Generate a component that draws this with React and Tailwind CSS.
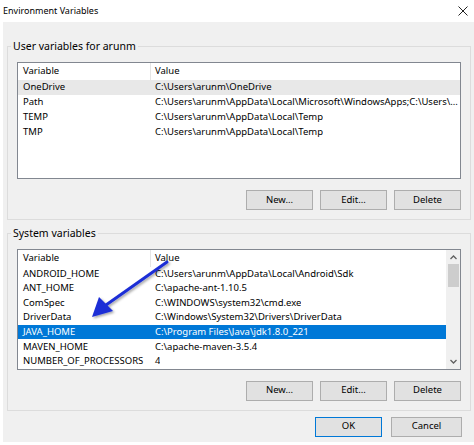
import React from "react";

const userVars = [
  ["OneDrive", "C:\\Users\\arunm\\OneDrive"],
  ["Path", "C:\\Users\\arunm\\AppData\\Local\\Microsoft\\WindowsApps;C:\\Users\\..."],
  ["TEMP", "C:\\Users\\arunm\\AppData\\Local\\Temp"],
  ["TMP", "C:\\Users\\arunm\\AppData\\Local\\Temp"],
];

const systemVars = [
  ["ANDROID_HOME", "C:\\Users\\arunm\\AppData\\Local\\Android\\Sdk"],
  ["ANT_HOME", "C:\\apache-ant-1.10.5"],
  ["ComSpec", "C:\\WINDOWS\\system32\\cmd.exe"],
  ["DriverData", "C:\\Windows\\System32\\Drivers\\DriverData"],
  ["JAVA_HOME", "C:\\Program Files\\Java\\jdk1.8.0_221"],
  ["MAVEN_HOME", "C:\\apache-maven-3.5.4"],
  ["NUMBER_OF_PROCESSORS", "4"],
];

const Button = ({ children, primary, wide }) => (
  <button
    className={`${wide ? "w-[71px]" : "w-[67px]"} h-[20px] bg-[#e1e1e1] text-[9.5px] text-black border ${
      primary ? "border-[#0078d7]" : "border-[#adadad]"
    }`}
  >
    {children}
  </button>
);

const Row = ({ name, value, state }) => {
  // state: "selected" | "inactive" | undefined
  const bg =
    state === "selected"
      ? "bg-[#0078d7] text-white"
      : state === "inactive"
      ? "bg-[#e8e8e8] text-black"
      : "text-black";
  return (
    <div className={`flex h-[15px] items-center whitespace-nowrap overflow-hidden ${bg}`}>
      <div className="w-[133px] pl-[5px] shrink-0 overflow-hidden">{name}</div>
      <div className="pl-[4px] overflow-hidden">{value}</div>
    </div>
  );
};

const ListView = ({ rows, height, selected, inactive, scroll }) => (
  <div className={`flex border border-[#828790] bg-white overflow-hidden ${height}`}>
    <div className="flex-1 flex flex-col min-w-0">
      <div className="flex h-[17px] shrink-0 items-center text-black">
        <div className="w-[133px] pl-[5px] border-r border-[#e5e5e5] h-full flex items-center">
          Variable
        </div>
        <div className="pl-[4px]">Value</div>
      </div>
      {rows.map(([n, v], i) => (
        <Row
          key={n}
          name={n}
          value={v}
          state={i === selected ? "selected" : i === inactive ? "inactive" : undefined}
        />
      ))}
    </div>
    {scroll && (
      <div className="w-[14px] shrink-0 bg-[#f0f0f0] flex flex-col items-center">
        <svg width="9" height="14" viewBox="0 0 9 14" className="shrink-0">
          <path d="M1.5 9 L4.5 6 L7.5 9" fill="none" stroke="#606060" strokeWidth="1.3" />
        </svg>
        <div className="w-[11px] h-[23px] bg-[#cdcdcd] shrink-0" />
        <div className="flex-1" />
        <svg width="9" height="14" viewBox="0 0 9 14" className="shrink-0">
          <path d="M1.5 5 L4.5 8 L7.5 5" fill="none" stroke="#606060" strokeWidth="1.3" />
        </svg>
      </div>
    )}
  </div>
);

const Group = ({ title, children }) => (
  <fieldset className="min-w-0 border border-[#dcdcdc] px-[9px] pb-[9px] pt-[7px]">
    <legend className="-ml-[6px] px-[2px] text-[10.5px] text-black">{title}</legend>
    {children}
  </fieldset>
);

export default function App() {
  return (
    <div
      className="relative w-[474px] h-[445px] bg-white text-[9.5px] overflow-hidden"
      style={{ fontFamily: '"Noto Sans", "Segoe UI", sans-serif' }}
    >
      <div className="h-[22px] flex items-center justify-between pl-[3px] pr-[6px] bg-white">
        <span className="text-[9px] text-black">Environment Variables</span>
        <svg width="10" height="10" viewBox="0 0 10 10">
          <path d="M0.5 0.5 L9.5 9.5 M9.5 0.5 L0.5 9.5" stroke="#222" strokeWidth="1" />
        </svg>
      </div>
      <div className="bg-[#f0f0f0] ml-[3px] h-[420px] pl-[4px] pr-[3px] pt-[17px] flex flex-col">
        <Group title="User variables for arunm">
          <ListView rows={userVars} height="h-[117px]" inactive={0} />
          <div className="flex justify-end gap-[7px] mt-[11px]">
            <Button>New...</Button>
            <Button>Edit...</Button>
            <Button>Delete</Button>
          </div>
        </Group>
        <div className="h-[6px]" />
        <Group title="System variables">
          <ListView rows={systemVars} height="h-[121px]" selected={4} scroll />
          <div className="flex justify-end gap-[7px] mt-[11px]">
            <Button>New...</Button>
            <Button>Edit...</Button>
            <Button>Delete</Button>
          </div>
        </Group>
        <div className="flex justify-end gap-[9px] mt-[6px] pr-[9px]">
          <Button primary>OK</Button>
          <Button wide>Cancel</Button>
        </div>
      </div>
      {/* annotation arrow drawn over the dialog */}
      <svg
        className="absolute left-0 top-0 pointer-events-none"
        width="474"
        height="445"
        viewBox="0 0 474 445"
      >
        <defs>
          <filter id="sh" x="-20%" y="-20%" width="140%" height="140%">
            <feDropShadow dx="1.5" dy="1.5" stdDeviation="1.2" floodColor="#000" floodOpacity="0.35" />
          </filter>
        </defs>
        <g filter="url(#sh)">
          <line x1="167" y1="262" x2="106" y2="305" stroke="#1c2fd6" strokeWidth="3" strokeLinecap="round" />
          <polygon points="92,317 99,297 113,311" fill="#1c2fd6" />
        </g>
      </svg>
    </div>
  );
}
